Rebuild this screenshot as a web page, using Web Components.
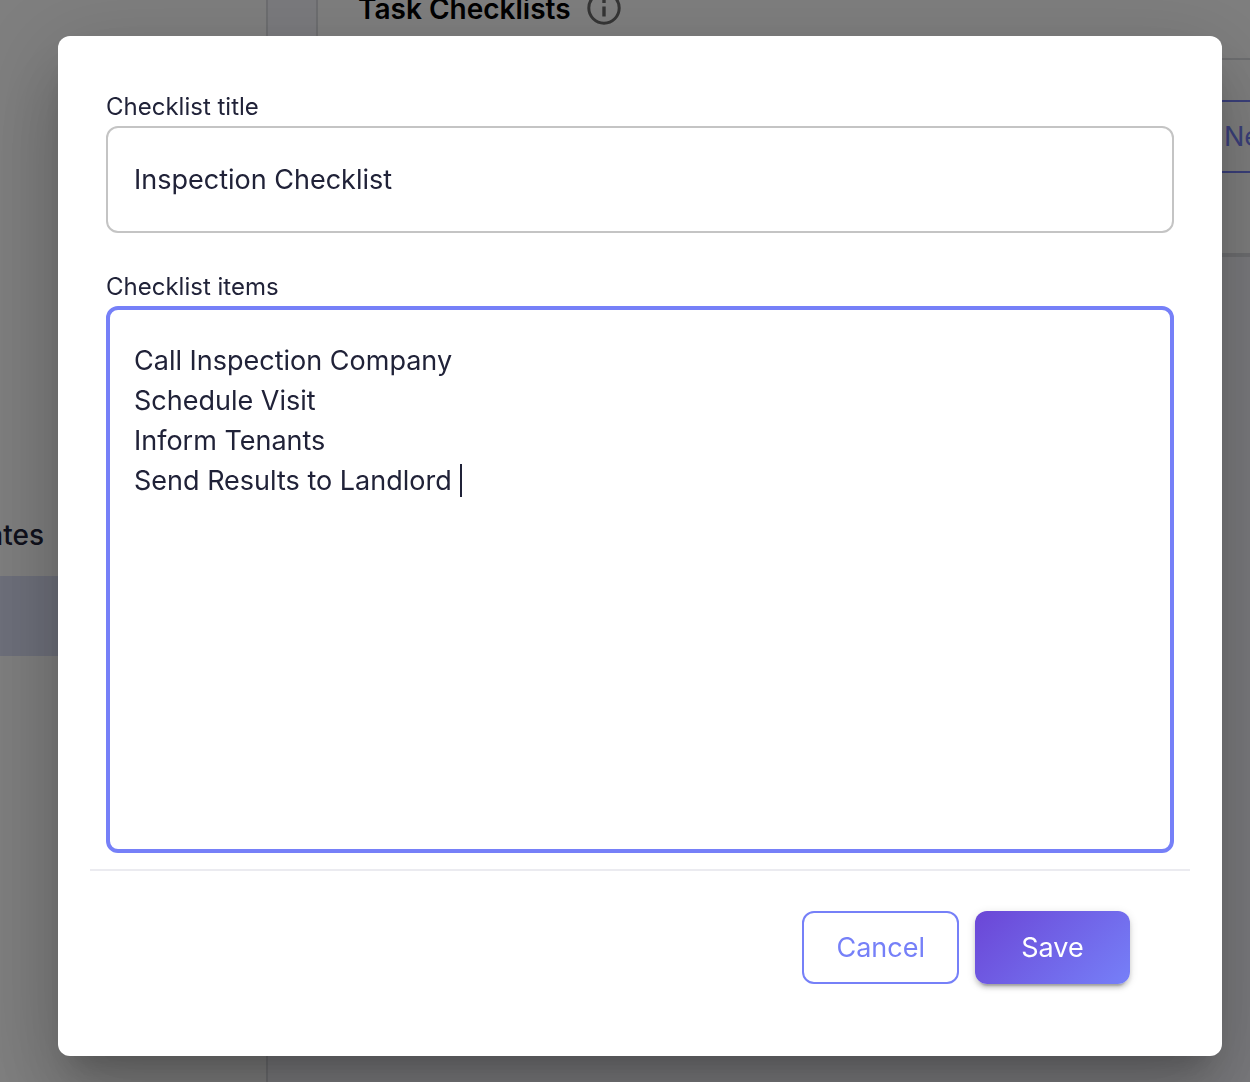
<!DOCTYPE html>
<html lang="en">
<head>
<meta charset="utf-8">
<meta name="viewport" content="width=device-width, initial-scale=1">
<title>Task Checklists</title>
<style>
    html, body {
        margin: 0;
        height: 100%;
    }
    body {
        --primary: #7680f8;
        --text: #202238;
        --line: #dcdde2;
        overflow: hidden;
        font-family: Inter, "Liberation Sans", sans-serif;
        font-size: 27px;
        color: var(--text);
    }
</style>
</head>
<body>
<app-shell>
    <side-nav slot="nav"></side-nav>
    <checklist-page></checklist-page>
</app-shell>
<modal-dialog>
    <checklist-form></checklist-form>
</modal-dialog>

<script>
class AppShell extends HTMLElement {
    constructor() {
        super();
        this.attachShadow({ mode: 'open' });
        this.shadowRoot.innerHTML = `
            <style>
                :host {
                    display: grid;
                    grid-template-columns: 268px minmax(0, 1fr);
                    min-height: 100%;
                    background-color: #f7f7fc;
                }
                main {
                    padding-left: 48px;
                }
            </style>
            <slot name="nav"></slot>
            <main><slot></slot></main>
        `;
    }
}

class SideNav extends HTMLElement {
    constructor() {
        super();
        this.attachShadow({ mode: 'open' });
        this.shadowRoot.innerHTML = `
            <style>
                :host {
                    display: block;
                    box-sizing: border-box;
                    padding-top: 494px;
                    background-color: #fff;
                    border-right: 2px solid var(--line);
                }
                a {
                    display: flex;
                    justify-content: flex-end;
                    width: 44px;
                    font-size: 28px;
                    line-height: 82px;
                    font-weight: 500;
                    color: inherit;
                    text-decoration: none;
                }
                .selected {
                    height: 80px;
                    background-color: #dce0f6;
                }
            </style>
            <nav>
                <a href="#templates">ates</a>
                <div class="selected"></div>
            </nav>
        `;
    }
}

class ChecklistPage extends HTMLElement {
    constructor() {
        super();
        this.attachShadow({ mode: 'open' });
        this.shadowRoot.innerHTML = `
            <style>
                :host {
                    display: block;
                    background-color: #fff;
                    border-left: 2px solid var(--line);
                    border-bottom: 4px solid var(--line);
                }
                header {
                    display: flex;
                    align-items: center;
                    gap: 16px;
                    height: 58px;
                    padding-left: 40px;
                    border-bottom: 2px solid var(--line);
                }
                h1 {
                    margin: 0;
                    padding-bottom: 40px;
                    font-size: 28px;
                    font-weight: 600;
                    line-height: 36px;
                    color: #000;
                }
                svg {
                    flex: none;
                    margin-bottom: 42px;
                }
                .tools {
                    display: flex;
                    justify-content: flex-end;
                    padding: 40px 0 80px;
                }
                button {
                    box-sizing: border-box;
                    width: 60px;
                    height: 73px;
                    padding: 0 0 0 32px;
                    border: 2px solid var(--primary);
                    border-right: 0;
                    border-radius: 12px 0 0 12px;
                    background: none;
                    font: inherit;
                    text-align: left;
                    color: var(--primary);
                }
            </style>
            <header>
                <h1>Task Checklists</h1>
                <svg width="34" height="34" viewBox="0 0 34 34" fill="none" stroke="#6b6b6b" stroke-width="3" aria-hidden="true">
                    <circle cx="17" cy="17" r="15.2"/>
                    <path d="M17 8.4v3.6M17 15.4v10" stroke-width="3.4"/>
                </svg>
            </header>
            <div class="tools"><button type="button">Ne</button></div>
        `;
    }
}

class ModalDialog extends HTMLElement {
    constructor() {
        super();
        this.attachShadow({ mode: 'open' });
        this.shadowRoot.innerHTML = `
            <style>
                :host {
                    position: fixed;
                    inset: 0;
                    box-sizing: border-box;
                    padding: 36px 28px 26px 58px;
                    overflow: hidden;
                    background-color: rgba(0, 0, 0, 0.5);
                }
                section {
                    padding: 57px 32px 72px;
                    border-radius: 12px;
                    background-color: #fff;
                    box-shadow: 0 22px 30px -14px rgba(0, 0, 0, 0.2),
                                0 48px 76px 6px rgba(0, 0, 0, 0.14),
                                0 18px 92px 16px rgba(0, 0, 0, 0.12);
                }
            </style>
            <section role="dialog" aria-modal="true"><slot></slot></section>
        `;
    }
}

class ChecklistForm extends HTMLElement {
    constructor() {
        super();
        this.attachShadow({ mode: 'open' });
        this.shadowRoot.innerHTML = `
            <style>
                :host {
                    display: block;
                }
                .fields {
                    display: grid;
                    gap: 40px;
                    padding: 0 16px 16px;
                }
                .field {
                    display: grid;
                    gap: 5px;
                }
                label {
                    font-size: 24px;
                    line-height: 28px;
                }
                input, textarea {
                    display: block;
                    box-sizing: border-box;
                    width: 100%;
                    margin: 0;
                    border-radius: 12px;
                    outline: none;
                    background-color: #fff;
                    font: inherit;
                    color: inherit;
                }
                input {
                    height: 107px;
                    padding: 0 26px;
                    border: 2px solid #c4c4c4;
                }
                textarea {
                    height: 547px;
                    padding: 31px 24px 28px;
                    border: 4px solid var(--primary);
                    line-height: 40px;
                    resize: none;
                    caret-color: transparent;
                }
                .editor {
                    position: relative;
                }
                .caret {
                    position: absolute;
                    width: 2px;
                    height: 33px;
                    background-color: var(--text);
                }
                footer {
                    display: flex;
                    justify-content: flex-end;
                    gap: 16px;
                    padding: 40px 60px 0 0;
                    border-top: 2px solid #ebebf0;
                }
            </style>
            <form>
                <div class="fields">
                    <div class="field">
                        <label for="title">Checklist title</label>
                        <input id="title" type="text" value="Inspection Checklist">
                    </div>
                    <div class="field">
                        <label for="items">Checklist items</label>
                        <div class="editor">
                            <textarea id="items" spellcheck="false">Call Inspection Company
Schedule Visit
Inform Tenants
Send Results to Landlord</textarea>
                            <span class="caret"></span>
                        </div>
                    </div>
                </div>
                <footer>
                    <form-button>Cancel</form-button>
                    <form-button class="primary">Save</form-button>
                </footer>
            </form>
        `;
        this.area = this.shadowRoot.querySelector('textarea');
        this.placeCaret = this.placeCaret.bind(this);
        this.area.addEventListener('input', this.placeCaret);
    }

    connectedCallback() {
        this.placeCaret();
    }

    // puts the caret bar after the last line of the text
    placeCaret() {
        const style = getComputedStyle(this.area);
        const lines = this.area.value.split('\n');
        const ctx = document.createElement('canvas').getContext('2d');
        ctx.font = style.fontSize + ' ' + style.fontFamily;
        const width = Math.round(ctx.measureText(lines[lines.length - 1]).width);
        const caret = this.shadowRoot.querySelector('.caret');
        const left = parseInt(style.borderLeftWidth) + parseInt(style.paddingLeft);
        const top = parseInt(style.borderTopWidth) + parseInt(style.paddingTop);
        caret.style.left = left + width + 8 + 'px';
        caret.style.top = top + (lines.length - 1) * parseInt(style.lineHeight) + 3 + 'px';
    }
}

class FormButton extends HTMLElement {
    constructor() {
        super();
        this.attachShadow({ mode: 'open' });
        this.shadowRoot.innerHTML = `
            <style>
                :host {
                    display: block;
                }
                button {
                    display: block;
                    box-sizing: border-box;
                    min-width: 155px;
                    height: 73px;
                    padding: 0 32px;
                    border: 2px solid var(--primary);
                    border-radius: 12px;
                    background-color: #fff;
                    font: inherit;
                    color: var(--primary);
                    cursor: pointer;
                }
                :host(.primary) button {
                    border: 0;
                    background: linear-gradient(135deg, #6b46d6, #7680f8);
                    color: #fff;
                    box-shadow: 0 6px 2px -4px rgba(0, 0, 0, 0.2),
                                0 4px 4px 0 rgba(0, 0, 0, 0.14),
                                0 2px 10px 0 rgba(0, 0, 0, 0.12);
                }
            </style>
            <button type="button"><slot></slot></button>
        `;
    }
}

customElements.define('app-shell', AppShell);
customElements.define('side-nav', SideNav);
customElements.define('checklist-page', ChecklistPage);
customElements.define('modal-dialog', ModalDialog);
customElements.define('form-button', FormButton);
customElements.define('checklist-form', ChecklistForm);
</script>
</body>
</html>
